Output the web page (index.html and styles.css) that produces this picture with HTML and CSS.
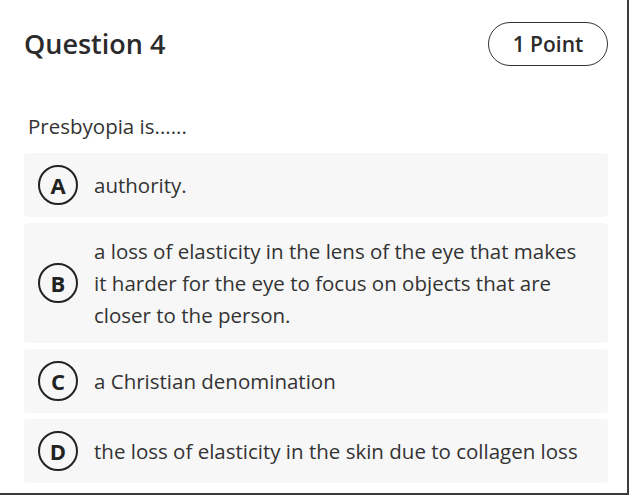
FILE: index.html
```html
<!DOCTYPE html>
<html lang="en">
<head>
<meta charset="utf-8">
<title>Question 4</title>
<link rel="stylesheet" href="styles.css">
</head>
<body>
<div class="frame">
  <div class="header">
    <h1 class="title">Question 4</h1>
    <span class="points">1 Point</span>
  </div>
  <p class="prompt">Presbyopia is......</p>
  <ul class="options">
    <li class="option"><span class="badge">A</span><span class="text">authority.</span></li>
    <li class="option"><span class="badge">B</span><span class="text">a loss of elasticity in the lens of the eye that makes it harder for the eye to focus on objects that are closer to the person.</span></li>
    <li class="option"><span class="badge">C</span><span class="text">a Christian denomination</span></li>
    <li class="option"><span class="badge">D</span><span class="text">the loss of elasticity in the skin due to collagen loss</span></li>
  </ul>
</div>
</body>
</html>
```

FILE: styles.css
```css
html, body {
  margin: 0;
  padding: 0;
  background: #ffffff;
}

body {
  font-family: "Open Sans", "Noto Sans", sans-serif;
  color: #333333;
}

.frame {
  box-sizing: border-box;
  width: 629px;
  height: 495px;
  border-right: 2px solid #3a3a3a;
  border-bottom: 2px solid #3a3a3a;
  padding: 22px 19px 0 24px;
}

.header {
  display: flex;
  align-items: center;
  justify-content: space-between;
  height: 44px;
}

.title {
  margin: 0;
  font-size: 27px;
  font-weight: 600;
  line-height: 44px;
  color: #2b2b2b;
}

.points {
  box-sizing: border-box;
  width: 120px;
  height: 44px;
  border: 1.5px solid #333333;
  border-radius: 22px;
  display: flex;
  align-items: center;
  justify-content: center;
  font-size: 21px;
  font-weight: 600;
  color: #2b2b2b;
}

.prompt {
  margin: 44px 0 0 4px;
  font-size: 20.5px;
  line-height: 32px;
}

.options {
  list-style: none;
  margin: 11px 0 0;
  padding: 0;
  display: flex;
  flex-direction: column;
  gap: 6px;
}

.option {
  display: flex;
  align-items: center;
  gap: 16px;
  min-height: 64px;
  box-sizing: border-box;
  padding: 12px 20px 12px 14px;
  background: #f7f7f7;
  border-radius: 4px;
}

.badge {
  flex: none;
  box-sizing: border-box;
  width: 40px;
  height: 40px;
  border: 2px solid #222222;
  border-radius: 50%;
  display: flex;
  align-items: center;
  justify-content: center;
  font-size: 22px;
  font-weight: 700;
  color: #222222;
}

.text {
  font-size: 20.5px;
  line-height: 32px;
  max-width: 488px;
}
```
